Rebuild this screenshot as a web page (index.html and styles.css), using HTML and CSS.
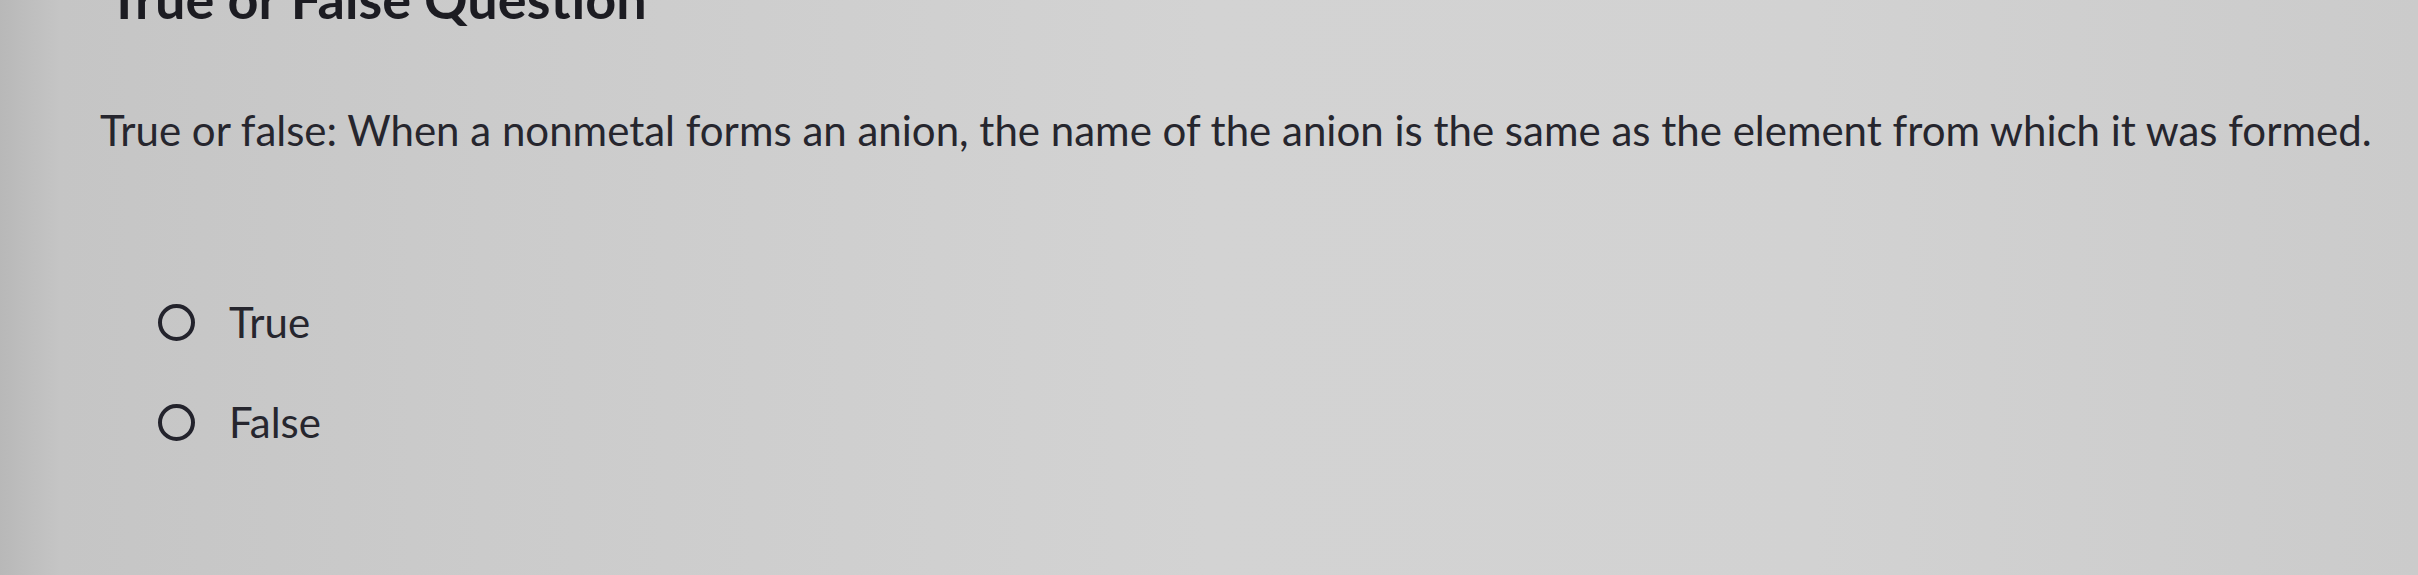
FILE: index.html
```html
<!DOCTYPE html>
<html lang="en">
<head>
<meta charset="utf-8">
<title>True or False Question</title>
<link rel="stylesheet" href="styles.css">
</head>
<body>
<main class="page">
  <h1 class="title">True or False Question</h1>
  <p class="prompt">True or false: When a nonmetal forms an anion, the name of the anion is the same as the element from which it was formed.</p>
  <div class="options">
    <label class="option"><span class="radio"></span><span class="label">True</span></label>
    <label class="option"><span class="radio"></span><span class="label">False</span></label>
  </div>
</main>
</body>
</html>
```
FILE: styles.css
```css
html, body {
  margin: 0;
  padding: 0;
  height: 100%;
}
body {
  background: linear-gradient(90deg, #b8b8b8 0%, #c5c5c5 2.5%, #cbcbcb 20%, #d3d3d3 50%, #d2d2d2 75%, #cbcbcb 100%);
  font-family: Lato, "Open Sans", sans-serif;
  color: #26262e;
  overflow: hidden;
}
.page {
  padding-left: 100px;
}
.title {
  margin: -31px 0 0 8px;
  font-size: 54px;
  font-weight: 700;
  line-height: 60px;
  color: #1c1c22;
}
.prompt {
  margin: 76px 0 0 0;
  font-size: 42px;
  line-height: 50px;
}
.options {
  margin: 142px 0 0 58px;
  display: flex;
  flex-direction: column;
  gap: 50px;
}
.option {
  display: flex;
  align-items: center;
  gap: 34px;
  font-size: 42px;
  line-height: 50px;
}
.radio {
  box-sizing: border-box;
  width: 37px;
  height: 37px;
  border: 4px solid #23232c;
  border-radius: 50%;
}
```
